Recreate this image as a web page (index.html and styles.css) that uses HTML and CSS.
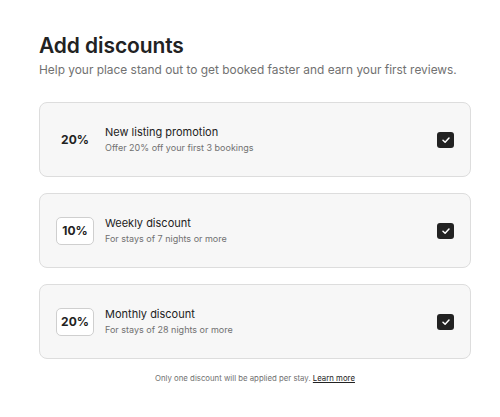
FILE: index.html
```html
<!DOCTYPE html>
<html>
<head>
<meta charset="utf-8">
<link rel="stylesheet" href="styles.css">
</head>
<body>
<main class="page">
  <h1 class="title">Add discounts</h1>
  <p class="subtitle">Help your place stand out to get booked faster and earn your first reviews.</p>
  <div class="list">
    <div class="card">
      <div class="pct plain">20%</div>
      <div class="info">
        <div class="name">New listing promotion</div>
        <div class="desc">Offer 20% off your first 3 bookings</div>
      </div>
      <div class="check"><svg width="10" height="10" viewBox="0 0 10 10"><path d="M2 5.2 L4.1 7.2 L8 3" fill="none" stroke="#fff" stroke-width="1.5" stroke-linecap="round" stroke-linejoin="round"/></svg></div>
    </div>
    <div class="card">
      <div class="pct boxed">10%</div>
      <div class="info">
        <div class="name">Weekly discount</div>
        <div class="desc">For stays of 7 nights or more</div>
      </div>
      <div class="check"><svg width="10" height="10" viewBox="0 0 10 10"><path d="M2 5.2 L4.1 7.2 L8 3" fill="none" stroke="#fff" stroke-width="1.5" stroke-linecap="round" stroke-linejoin="round"/></svg></div>
    </div>
    <div class="card">
      <div class="pct boxed">20%</div>
      <div class="info">
        <div class="name">Monthly discount</div>
        <div class="desc">For stays of 28 nights or more</div>
      </div>
      <div class="check"><svg width="10" height="10" viewBox="0 0 10 10"><path d="M2 5.2 L4.1 7.2 L8 3" fill="none" stroke="#fff" stroke-width="1.5" stroke-linecap="round" stroke-linejoin="round"/></svg></div>
    </div>
  </div>
  <p class="note">Only one discount will be applied per stay. <a href="#" class="link">Learn more</a></p>
</main>
</body>
</html>
```
FILE: styles.css
```css
html, body {
  margin: 0;
  padding: 0;
  background: #fff;
}
body {
  font-family: Inter, "Noto Sans", "Liberation Sans", sans-serif;
  color: #222;
}
.page {
  width: 432px;
  margin-left: 39px;
  padding-top: 33px;
}
.title {
  margin: 0;
  font-size: 21px;
  font-weight: 600;
  line-height: 26px;
  letter-spacing: -0.1px;
  color: #222;
}
.subtitle {
  margin: 3px 0 0;
  font-size: 11.9px;
  line-height: 16px;
  color: #717171;
}
.list {
  margin-top: 24px;
  display: flex;
  flex-direction: column;
  gap: 16px;
}
.card {
  height: 75px;
  box-sizing: border-box;
  background: #f7f7f7;
  border: 1px solid #dddddd;
  border-radius: 8px;
  display: flex;
  align-items: center;
  padding: 0 16px 0 16px;
}
.pct {
  font-size: 12px;
  font-weight: 700;
  color: #222;
  box-sizing: border-box;
  width: 38px;
  height: 28px;
  display: flex;
  align-items: center;
  justify-content: center;
  flex-shrink: 0;
}
.pct.boxed {
  background: #fff;
  border: 1px solid #cfcfcf;
  border-radius: 5px;
}
.info {
  margin-left: 11px;
  flex: 1;
  margin-top: -2px;
}
.name {
  font-size: 11px;
  line-height: 15px;
  color: #222;
}
.desc {
  margin-top: 2px;
  font-size: 9px;
  line-height: 11px;
  color: #717171;
}
.check {
  width: 17px;
  height: 16px;
  background: #222;
  border-radius: 3px;
  display: flex;
  align-items: center;
  justify-content: center;
  flex-shrink: 0;
  margin-right: 0;
}
.note {
  margin: 14px 0 0;
  text-align: center;
  font-size: 7.8px;
  line-height: 10px;
  color: #717171;
}
.link {
  color: #222;
  text-decoration: underline;
}
```
